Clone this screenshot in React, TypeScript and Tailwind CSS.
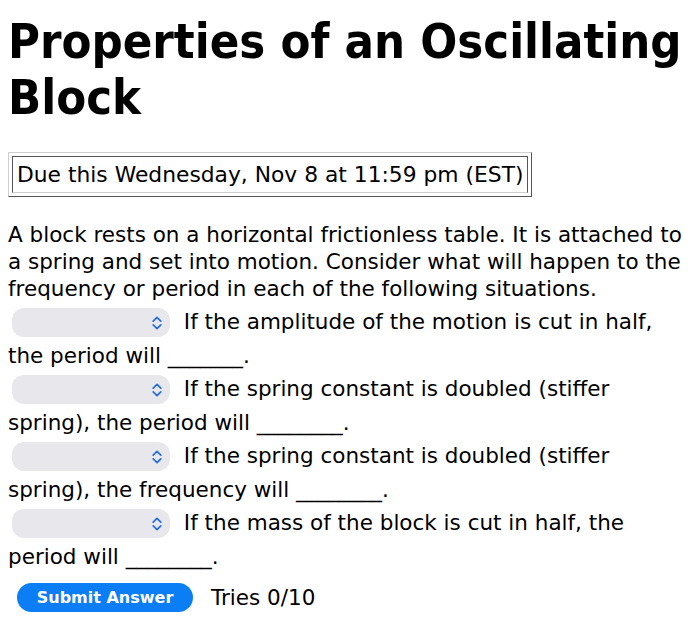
import React from 'react';

const QUESTIONS = [
  'If the amplitude of the motion is cut in half, the period will _______.',
  'If the spring constant is doubled (stiffer spring), the period will ________.',
  'If the spring constant is doubled (stiffer spring), the frequency will ________.',
  'If the mass of the block is cut in half, the period will ________.',
];

function Chevron() {
  return (
    <svg width="12" height="15" viewBox="0 0 12 15" className="absolute right-[7px] top-1/2 -translate-y-1/2">
      <path d="M2.2 5.6 L6 1.9 L9.8 5.6 M2.2 9.4 L6 13.1 L9.8 9.4" fill="none" stroke="#2a6fd8" strokeWidth="1.8" strokeLinecap="round" strokeLinejoin="round" />
    </svg>
  );
}

// stand-in for the native <select> the page shows
function AnswerSelect() {
  return (
    <span className="relative inline-block align-middle w-[158px] h-[29px] my-[3px] ml-[4px] mr-[7px] rounded-[12px] bg-[#e8e8ec]">
      <Chevron />
    </span>
  );
}

export default function App() {
  return (
    <div className="min-h-screen bg-white text-black px-[8px] text-[21.5px] font-['DejaVu_Sans',Verdana,sans-serif]">
      <h1 className="pt-[13px] text-[48.5px] leading-[56px] font-bold font-['DejaVu_Sans_Condensed','DejaVu_Sans',sans-serif]">
        Properties of an Oscillating Block
      </h1>

      <div className="mt-[27px] inline-block p-[3px] border border-t-[#cfcfcf] border-l-[#cfcfcf] border-b-[#555] border-r-[#555]">
        <div className="px-[4px] text-[21.8px] leading-[35px] border border-t-[#555] border-l-[#555] border-b-[#cfcfcf] border-r-[#555]">
          Due this Wednesday, Nov 8 at 11:59 pm (EST)
        </div>
      </div>

      <p className="mt-[24px] leading-[27px]">
        A block rests on a horizontal frictionless table. It is attached to a spring and set into motion. Consider what will happen to the frequency or period in each of the following situations.
      </p>

      <div className="mt-[3px] leading-[32px]">
        {QUESTIONS.map((q) => (
          <div key={q}>
            <AnswerSelect /> {q}
          </div>
        ))}
      </div>

      <div className="mt-[10px] flex items-center gap-[18px]">
        <button className="ml-[9px] h-[29px] w-[176px] rounded-full bg-[#0c7ef5] text-white font-bold text-[16px] leading-[29px] font-['DejaVu_Sans',sans-serif]">
          Submit Answer
        </button>
        <span className="leading-[29px]">Tries 0/10</span>
      </div>
    </div>
  );
}
